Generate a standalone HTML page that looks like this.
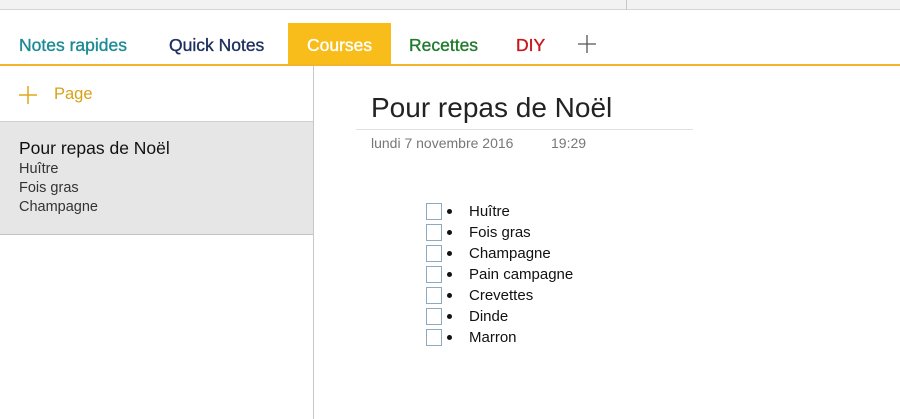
<!DOCTYPE html>
<html><head><meta charset="utf-8"><style>
*{margin:0;padding:0;box-sizing:border-box}
body{width:900px;height:419px;overflow:hidden;background:#fff;font-family:"Liberation Sans",sans-serif;position:relative}
.a{position:absolute}
.tab{position:absolute;top:23px;height:42px;line-height:44px;font-size:17.5px;white-space:nowrap;-webkit-text-stroke:0.35px currentColor}
.item{position:absolute;left:469px;font-size:15px;color:#111}
.cb{position:absolute;left:426px;width:16px;height:17px;border:1px solid #8fa9bf}
.dot{position:absolute;left:447px;width:5px;height:5px;border-radius:50%;background:#111}
</style></head><body>
<div class="a" style="left:0;top:0;width:900px;height:10px;background:#f2f2f2;border-bottom:1px solid #d4d4d4"></div>
<div class="a" style="left:626px;top:0;width:1px;height:10px;background:#c8c8c8"></div>

<div class="a" style="left:288px;top:23px;width:103px;height:42px;background:#f8bd1a"></div>
<div class="tab" style="left:19px;color:#1b8a94">Notes rapides</div>
<div class="tab" style="left:169px;color:#1c2f5e">Quick Notes</div>
<div class="tab" style="left:307px;color:#fff">Courses</div>
<div class="tab" style="left:409px;color:#1f7a2c">Recettes</div>
<div class="tab" style="left:516px;color:#c8161d">DIY</div>
<svg class="a" style="left:577px;top:34px" width="20" height="20"><path d="M10 1V19M1 10H19" stroke="#555" stroke-width="1.3"/></svg>
<div class="a" style="left:0;top:64px;width:900px;height:2px;background:#f3b62a"></div>

<div class="a" style="left:313px;top:66px;width:1px;height:353px;background:#c8c8c8"></div>
<svg class="a" style="left:18px;top:85px" width="20" height="20"><path d="M10 1V19M1 10H19" stroke="#e0a918" stroke-width="1.5"/></svg>
<div class="a" style="left:54px;top:85px;font-size:16.5px;color:#d7a21a">Page</div>

<div class="a" style="left:0;top:121px;width:313px;height:114px;background:#e6e6e6;border-top:1px solid #cfcfcf;border-bottom:1px solid #c4c4c4"></div>
<div class="a" style="left:19px;top:138px;font-size:17.5px;color:#111">Pour repas de Noël</div>
<div class="a" style="left:19px;top:160px;font-size:14.5px;color:#333;line-height:19px">Huître<br>Fois gras<br>Champagne</div>

<div class="a" style="left:371px;top:92px;font-size:28px;color:#222">Pour repas de Noël</div>
<div class="a" style="left:356px;top:129px;width:337px;height:1px;background:#e2e2e2"></div>
<div class="a" style="left:371px;top:135px;font-size:14px;color:#777">lundi 7 novembre 2016</div>
<div class="a" style="left:551px;top:135px;font-size:14px;color:#777">19:29</div>

<div class="cb" style="top:203px"></div><div class="dot" style="top:209px"></div><div class="item" style="top:203px">Huître</div>
<div class="cb" style="top:224px"></div><div class="dot" style="top:230px"></div><div class="item" style="top:224px">Fois gras</div>
<div class="cb" style="top:245px"></div><div class="dot" style="top:251px"></div><div class="item" style="top:245px">Champagne</div>
<div class="cb" style="top:266px"></div><div class="dot" style="top:272px"></div><div class="item" style="top:266px">Pain campagne</div>
<div class="cb" style="top:287px"></div><div class="dot" style="top:293px"></div><div class="item" style="top:287px">Crevettes</div>
<div class="cb" style="top:308px"></div><div class="dot" style="top:314px"></div><div class="item" style="top:308px">Dinde</div>
<div class="cb" style="top:329px"></div><div class="dot" style="top:335px"></div><div class="item" style="top:329px">Marron</div>
</body></html>
